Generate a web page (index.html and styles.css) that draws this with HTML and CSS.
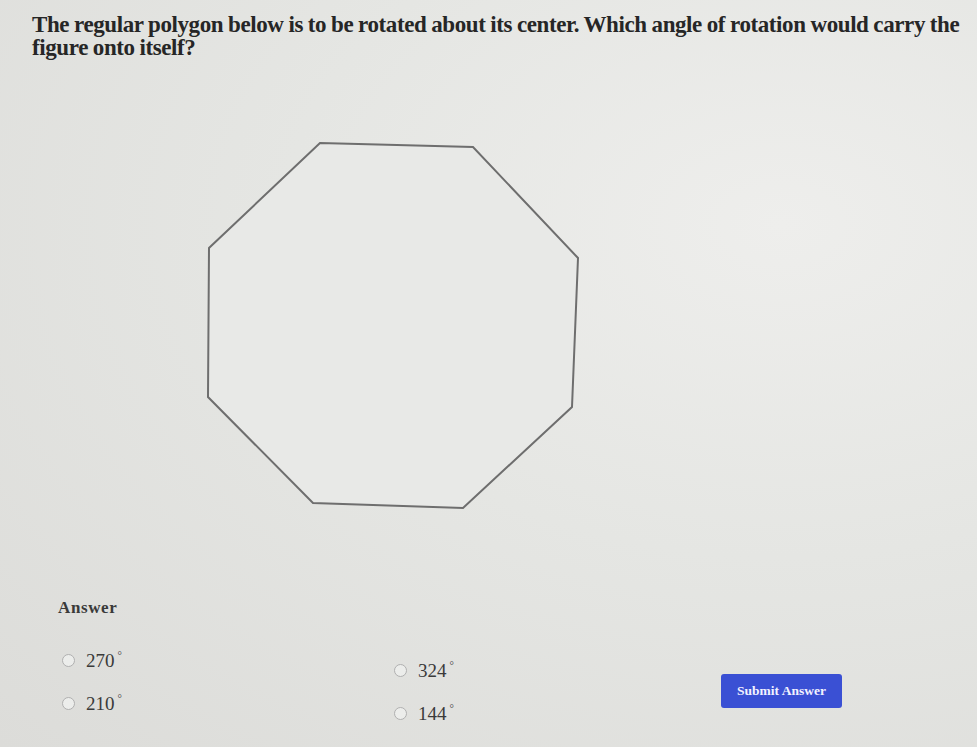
FILE: index.html
```html
<!DOCTYPE html>
<html>
<head>
<meta charset="utf-8">
<link rel="stylesheet" href="styles.css">
</head>
<body>
<main class="page">
  <p class="question">The regular polygon below is to be rotated about its center. Which angle of rotation would carry the figure onto itself?</p>
  <div class="figure">
    <svg width="390" height="385" viewBox="0 0 390 385">
      <polygon points="120,11 273,15 378,126 372,275 263,376 113,371 8,265 9,116" fill="#e8e9e7" stroke="#6e6e6e" stroke-width="2"/>
    </svg>
  </div>
  <section class="answer">
    <h2 class="answer-label">Answer</h2>
    <div class="choices">
      <div class="col">
        <label class="choice"><span class="radio"></span><span class="val">270<sup>°</sup></span></label>
        <label class="choice"><span class="radio"></span><span class="val">210<sup>°</sup></span></label>
      </div>
      <div class="col col-right">
        <label class="choice"><span class="radio"></span><span class="val">324<sup>°</sup></span></label>
        <label class="choice"><span class="radio"></span><span class="val">144<sup>°</sup></span></label>
      </div>
      <div class="col col-btn">
        <button class="submit">Submit Answer</button>
      </div>
    </div>
  </section>
</main>
</body>
</html>
```
FILE: styles.css
```css
html, body {
  margin: 0;
  padding: 0;
  height: 100%;
}
body {
  background: radial-gradient(ellipse at 80% 30%, #eeeeec 0%, #e5e6e3 45%, #dcdcd9 100%);
  font-family: "Liberation Serif", "DejaVu Serif", serif;
  color: #2b2b2b;
  overflow: hidden;
}
.page {
  width: 977px;
  height: 747px;
  position: relative;
}
.question {
  margin: 0;
  padding: 13px 6px 0 32px;
  font-size: 23px;
  font-weight: bold;
  line-height: 23px;
  letter-spacing: -0.4px;
  word-spacing: -0.5px;
  color: #262626;
}
.figure {
  margin: 73px 0 0 200px;
  height: 385px;
}
.figure svg { display: block; }
.answer {
  margin-top: 81px;
  padding-left: 58px;
}
.answer-label {
  margin: 0;
  font-size: 17px;
  font-weight: bold;
  line-height: 20px;
  color: #3a3a3a;
  letter-spacing: 0.6px;
}
.choices {
  display: grid;
  grid-template-columns: 332px 331px auto;
  margin-top: 31px;
}
.col {
  display: flex;
  flex-direction: column;
  gap: 21px;
}
.col-right {
  padding-top: 10px;
}
.col-btn {
  padding-top: 25px;
}
.choice {
  display: flex;
  align-items: center;
  height: 22px;
  font-size: 19px;
  color: #3a3a3a;
}
.radio {
  width: 11px;
  height: 11px;
  border: 1px solid #b0b0b0;
  border-radius: 50%;
  background: #ecedeb;
  margin-left: 4px;
  margin-right: 11px;
}
.val sup {
  font-size: 11px;
  vertical-align: 8px;
  margin-left: 3px;
}
.submit {
  width: 121px;
  height: 34px;
  border: none;
  border-radius: 3px;
  background: #3a50d4;
  color: #f2f2ff;
  font-family: "Liberation Serif", serif;
  font-weight: bold;
  font-size: 13.5px;
  padding: 0;
}
```
